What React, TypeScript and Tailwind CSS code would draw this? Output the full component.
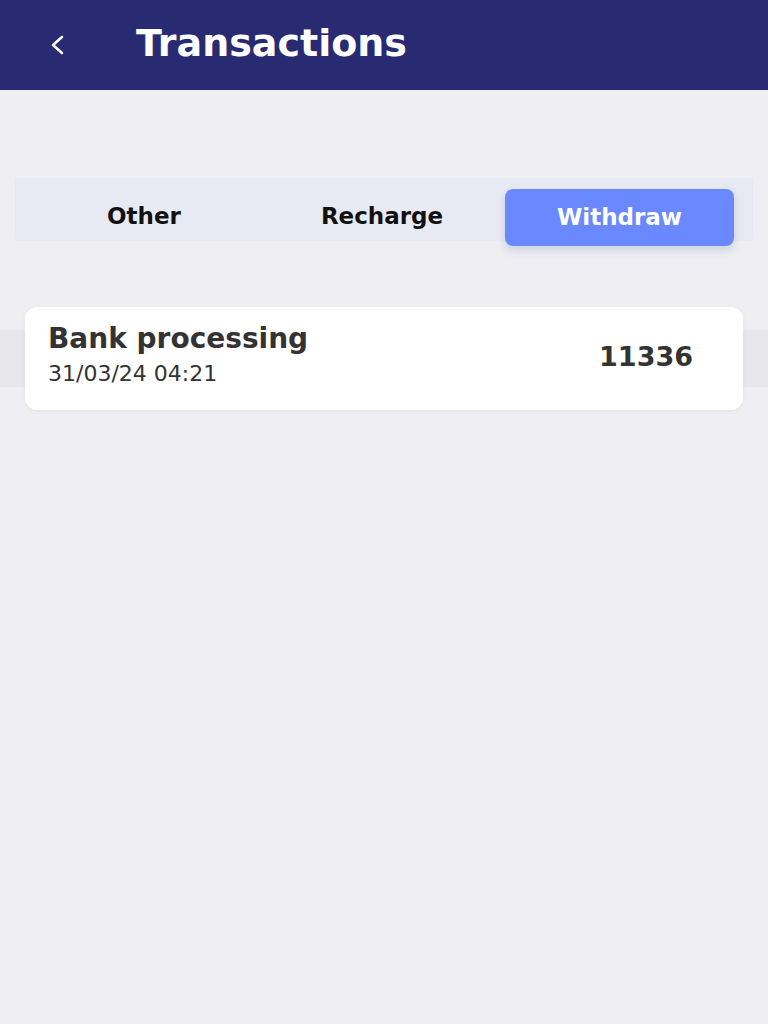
function Header() {
  return (
    <header className="h-[90px] bg-[#282a72] flex items-center">
      <button className="w-[136px] h-full flex items-center pl-[48px]">
        <svg width="20" height="24" viewBox="0 0 20 24" fill="none">
          <path d="M14 4L5 12L14 20" stroke="#ffffff" strokeWidth="2.6" strokeLinecap="round" strokeLinejoin="round" />
        </svg>
      </button>
      <h1 className="font-['DejaVu_Sans',_sans-serif] font-bold text-[38px] text-white mt-[-4px]">
        Transactions
      </h1>
    </header>
  );
}

function Tabs() {
  const tabs = ["Other", "Recharge", "Withdraw"];
  const active = "Withdraw";
  return (
    <div className="mx-[15px] mt-[88px] h-[63px] bg-[#e8eaf3] rounded-[3px] grid grid-cols-3 pl-[10px] pr-[14px]">
      {tabs.map((t) =>
        t === active ? (
          <div key={t} className="relative">
            <div className="absolute left-[4px] right-[5px] top-[11px] h-[57px] bg-[#6a88ff] rounded-[8px] shadow-[0_4px_10px_rgba(60,70,120,0.18)] flex items-center justify-center font-['DejaVu_Sans',_sans-serif] font-bold text-[23px] text-white">
              {t}
            </div>
          </div>
        ) : (
          <div key={t} className="flex items-center justify-center pt-[14px] font-['DejaVu_Sans',_sans-serif] font-bold text-[23px] text-[#111]">
            {t}
          </div>
        )
      )}
    </div>
  );
}

function TransactionCard() {
  return (
    <div className="relative mt-[66px]">
      {/* faint band behind the card */}
      <div className="absolute left-0 right-0 top-[23px] h-[57px] bg-[#e6e6eb]" />
      <div className="relative mx-[25px] h-[103px] bg-white rounded-[12px] shadow-[0_1px_4px_rgba(0,0,0,0.05)] flex items-center justify-between pl-[23px] pr-[50px]">
        <div className="flex flex-col">
          <div className="font-['DejaVu_Sans',_sans-serif] font-bold text-[28px] text-[#333] leading-[34px] mt-[-9px]">
            Bank processing
          </div>
          <div className="font-['DejaVu_Sans',_sans-serif] text-[22px] text-[#333] leading-[26px] mt-[5px]">
            31/03/24 04:21
          </div>
        </div>
        <div className="font-['DejaVu_Sans',_sans-serif] font-bold text-[27px] text-[#333] mt-[-2px]">
          11336
        </div>
      </div>
    </div>
  );
}

export default function App() {
  return (
    <div className="min-h-[1024px] bg-[#eeeef3]">
      <Header />
      <Tabs />
      <TransactionCard />
    </div>
  );
}
